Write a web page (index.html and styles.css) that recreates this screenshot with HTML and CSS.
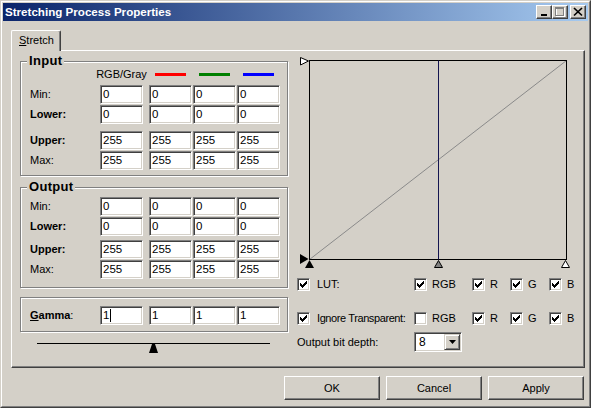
FILE: index.html
```html
<!DOCTYPE html>
<html>
<head>
<meta charset="utf-8">
<title>Stretching Process Properties</title>
<link rel="stylesheet" href="styles.css">
</head>
<body>
<div class="window">
  <div class="frame">
    <div class="titlebar">
      <span class="title">Stretching Process Properties</span>
      <div class="tbtns">
        <div class="tbtn"><svg width="14" height="12" viewBox="0 0 14 12"><rect x="4" y="8" width="6" height="2" fill="#000"/></svg></div>
        <div class="tbtn"><svg width="14" height="12" viewBox="0 0 14 12"><rect x="3.5" y="2.5" width="8" height="8" fill="none" stroke="#fff"/><rect x="2.5" y="1.5" width="8" height="8" fill="none" stroke="#808080"/><rect x="2" y="2" width="9" height="1" fill="#808080"/></svg></div>
        <div class="tbtn close"><svg width="14" height="12" viewBox="0 0 14 12"><path d="M3 2 L11 9.5 M11 2 L3 9.5" stroke="#000" stroke-width="1.7" fill="none"/></svg></div>
      </div>
    </div>
    <div class="content">
      <div class="tabs"><div class="tab"><u>S</u>tretch</div></div>
      <div class="panel">
        <div class="left">
          <div class="group g-input">
            <div class="gtitle">Input</div>
            <div class="hdr">
              <div class="lbl"></div>
              <div class="hc">RGB/Gray</div>
              <div class="hc c2"><span class="bar red"></span></div>
              <div class="hc c3"><span class="bar green"></span></div>
              <div class="hc c4"><span class="bar blue"></span></div>
            </div>
            <div class="row first-in"><div class="lbl">Min:</div><div class="field">0</div><div class="field c2">0</div><div class="field c3">0</div><div class="field c4">0</div></div>
            <div class="row"><div class="lbl b">Lower:</div><div class="field">0</div><div class="field c2">0</div><div class="field c3">0</div><div class="field c4">0</div></div>
            <div class="row split-in"><div class="lbl b">Upper:</div><div class="field">255</div><div class="field c2">255</div><div class="field c3">255</div><div class="field c4">255</div></div>
            <div class="row"><div class="lbl">Max:</div><div class="field">255</div><div class="field c2">255</div><div class="field c3">255</div><div class="field c4">255</div></div>
          </div>
          <div class="group g-output">
            <div class="gtitle">Output</div>
            <div class="row first-out"><div class="lbl">Min:</div><div class="field">0</div><div class="field c2">0</div><div class="field c3">0</div><div class="field c4">0</div></div>
            <div class="row"><div class="lbl b">Lower:</div><div class="field">0</div><div class="field c2">0</div><div class="field c3">0</div><div class="field c4">0</div></div>
            <div class="row split-out"><div class="lbl b">Upper:</div><div class="field">255</div><div class="field c2">255</div><div class="field c3">255</div><div class="field c4">255</div></div>
            <div class="row"><div class="lbl">Max:</div><div class="field">255</div><div class="field c2">255</div><div class="field c3">255</div><div class="field c4">255</div></div>
          </div>
          <div class="group g-gamma">
            <div class="row"><div class="lbl"><span class="b"><u>G</u>amma</span>:</div><div class="field">1<span class="caret"></span></div><div class="field c2">1</div><div class="field c3">1</div><div class="field c4">1</div></div>
          </div>
          <div class="slider">
            <div class="track"></div>
            <svg class="thumb" width="9" height="9" viewBox="0 0 9 9"><polygon points="3,0 6,0 9,9 0,9" fill="#000"/></svg>
          </div>
        </div>
        <div class="right">
          <svg class="graph" width="276" height="216" viewBox="0 0 276 216">
            <line x1="11.5" y1="204.5" x2="268.5" y2="5.5" stroke="#8a8a8a" stroke-width="1"/>
            <rect x="11.5" y="5.5" width="257" height="199" fill="none" stroke="#000"/>
            <line x1="140.5" y1="5.5" x2="140.5" y2="204.5" stroke="#141450"/>
            <polygon points="2.5,2.5 10.5,6 2.5,10" fill="#fff" stroke="#000"/>
            <polygon points="2,199 10.5,204 2,209" fill="#000"/>
            <polygon points="7,213 11.5,205 16,213" fill="#000"/>
            <polygon points="136.5,212.5 140.5,205.5 144.5,212.5" fill="#808080" stroke="#000"/>
            <polygon points="263.5,212.5 267.5,205.5 271.5,212.5" fill="#fff" stroke="#000"/>
          </svg>
          <div class="opts lut">
            <div class="opt wide"><span class="cb on"></span>LUT:</div>
            <div class="opt"><span class="cb on"></span>RGB</div>
            <div class="opt"><span class="cb on"></span>R</div>
            <div class="opt"><span class="cb on"></span>G</div>
            <div class="opt"><span class="cb on"></span>B</div>
          </div>
          <div class="opts ign">
            <div class="opt wide"><span class="cb on"></span><span class="tight">Ignore Transparent:</span></div>
            <div class="opt"><span class="cb"></span>RGB</div>
            <div class="opt"><span class="cb on"></span>R</div>
            <div class="opt"><span class="cb on"></span>G</div>
            <div class="opt"><span class="cb on"></span>B</div>
          </div>
          <div class="opts depth">
            <div class="opt">Output bit depth:</div>
            <div class="select"><span class="sval">8</span><span class="sbtn"><svg width="7" height="4" viewBox="0 0 7 4"><polygon points="0,0 7,0 3.5,4" fill="#000"/></svg></span></div>
          </div>
        </div>
      </div>
      <div class="buttons">
        <div class="btn">OK</div>
        <div class="btn">Cancel</div>
        <div class="btn">Apply</div>
      </div>
    </div>
  </div>
</div>
</body>
</html>
```
FILE: styles.css
```css
html, body {
  margin: 0;
  padding: 0;
  background: #d4d0c8;
}
body {
  font-family: "Liberation Sans", Arial, sans-serif;
  font-size: 11px;
  color: #000;
}
.window {
  width: 591px;
  height: 408px;
  box-sizing: border-box;
  border: 1px solid;
  border-color: #d4d0c8 #404040 #404040 #d4d0c8;
  background: #d4d0c8;
}
.frame {
  height: 100%;
  box-sizing: border-box;
  border: 1px solid;
  border-color: #fff #808080 #808080 #fff;
  padding: 1px;
  display: flex;
  flex-direction: column;
}
.titlebar {
  height: 18px;
  flex: none;
  display: flex;
  align-items: center;
  padding: 0 2px;
  background: linear-gradient(to right, #0a246a, #a6caf0);
}
.title {
  color: #fff;
  font-weight: bold;
  font-size: 11.6px;
  line-height: 18px;
}
.tbtns {
  margin-left: auto;
  display: flex;
}
.tbtn {
  width: 16px;
  height: 14px;
  box-sizing: border-box;
  border: 1px solid;
  border-color: #fff #404040 #404040 #fff;
  box-shadow: inset -1px -1px 0 #808080;
  background: #d4d0c8;
}
.tbtn svg { display: block; }
.tbtn.close { margin-left: 2px; }
.content {
  flex: 1;
  padding: 9px 3px 0 8px;
  display: flex;
  flex-direction: column;
}
.tabs {
  display: flex;
  height: 20px;
}
.tab {
  position: relative;
  z-index: 1;
  width: 50px;
  height: 21px;
  box-sizing: border-box;
  border-left: 1px solid #fff;
  border-top: 1px solid #fff;
  border-right: 1px solid #404040;
  border-top-left-radius: 2px;
  border-top-right-radius: 2px;
  box-shadow: inset -1px 0 0 #808080;
  background: #d4d0c8;
  padding-left: 7px;
  line-height: 18px;
}
.panel {
  height: 318px;
  box-sizing: border-box;
  border: 1px solid;
  border-color: #fff #404040 #404040 #fff;
  box-shadow: inset -1px -1px 0 #808080;
  display: flex;
}
.left {
  width: 268px;
  margin: 10px 0 0 8px;
}
.group {
  width: 268px;
  box-sizing: border-box;
  border: 1px solid #808080;
  box-shadow: inset 1px 1px 0 #fff, 1px 1px 0 #fff;
  padding-left: 9px;
}
.g-input { height: 115px; }
.g-output { height: 101px; margin-top: 11px; }
.g-gamma { height: 35px; margin-top: 9px; padding-top: 8px; }
.gtitle {
  display: table;
  margin: -8px 0 0 -3px;
  padding: 0 2px;
  background: #d4d0c8;
  font-weight: bold;
  font-size: 13px;
  line-height: 14px;
  letter-spacing: 0.3px;
}
.hdr {
  display: flex;
  align-items: center;
  height: 13px;
  line-height: 13px;
}
.hc {
  width: 43px;
  text-align: center;
  display: flex;
  justify-content: center;
  align-items: center;
  height: 13px;
}
.bar {
  display: block;
  width: 31px;
  height: 3px;
  margin-top: -1px;
}
.red { background: #ff0000; }
.green { background: #008000; }
.blue { background: #0000ff; }
.row {
  display: flex;
  height: 19px;
  margin-top: 1px;
}
.first-in { margin-top: 4px; }
.split-in { margin-top: 7px; }
.first-out { margin-top: 3px; }
.split-out { margin-top: 4px; }
.g-gamma .row { margin-top: 0; }
.lbl {
  width: 70px;
  line-height: 19px;
  white-space: nowrap;
}
.b { font-weight: bold; }
.field {
  width: 43px;
  height: 19px;
  box-sizing: border-box;
  border: 1px solid;
  border-color: #808080 #fff #fff #808080;
  box-shadow: inset 1px 1px 0 #404040, inset -1px -1px 0 #d4d0c8;
  background: #fff;
  padding-left: 2px;
  line-height: 17px;
  display: flex;
  align-items: center;
  font-size: 11.5px;
}
.c2 { margin-left: 6px; }
.c3, .c4 { margin-left: 1px; }
.caret {
  display: inline-block;
  width: 1px;
  height: 13px;
  background: #000;
  margin-left: 1px;
}
.slider {
  margin: 11px 0 0 17px;
}
.track {
  width: 233px;
  height: 0;
  border-top: 1px solid #000;
}
.thumb {
  display: block;
  margin-left: 112px;
}
.right {
  margin-left: 9px;
  display: flex;
  flex-direction: column;
}
.graph {
  display: block;
  margin: 4px 0 0 1px;
}
.opts {
  display: grid;
  grid-template-columns: 117px 58px 38px 39px auto;
  align-items: center;
}
.lut { margin-top: 7px; height: 13px; }
.ign { margin-top: 21px; height: 13px; }
.depth { margin-top: 7px; height: 20px; }
.opt {
  display: flex;
  align-items: center;
  gap: 5px;
  white-space: nowrap;
  line-height: 13px;
}
.opt.wide { gap: 7px; }
.tight { letter-spacing: -0.4px; }
.cb {
  flex: none;
  width: 13px;
  height: 13px;
  box-sizing: border-box;
  border: 1px solid;
  border-color: #808080 #fff #fff #808080;
  box-shadow: inset 1px 1px 0 #404040, inset -1px -1px 0 #d4d0c8;
  background: #fff;
}
.cb.on {
  background: #fff url("data:image/svg+xml,%3Csvg xmlns='http://www.w3.org/2000/svg' width='11' height='11'%3E%3Cpath d='M2 4h1v3H2zM3 5h1v3H3zM4 6h1v3H4zM5 5h1v3H5zM6 4h1v3H6zM7 3h1v3H7zM8 2h1v3H8z' fill='%23000'/%3E%3C/svg%3E") no-repeat 0 0;
}
.select {
  width: 48px;
  height: 20px;
  box-sizing: border-box;
  border: 1px solid;
  border-color: #808080 #fff #fff #808080;
  box-shadow: inset 1px 1px 0 #404040, inset -1px -1px 0 #d4d0c8;
  background: #fff;
  display: flex;
  align-items: center;
  padding: 1px;
}
.sval {
  padding-left: 3px;
  font-size: 12px;
}
.sbtn {
  margin-left: auto;
  width: 16px;
  height: 16px;
  box-sizing: border-box;
  border: 1px solid;
  border-color: #d4d0c8 #404040 #404040 #d4d0c8;
  box-shadow: inset 1px 1px 0 #fff, inset -1px -1px 0 #808080;
  background: #d4d0c8;
  display: flex;
  align-items: center;
  justify-content: center;
}
.sbtn svg { display: block; }
.buttons {
  display: flex;
  justify-content: flex-end;
  gap: 6px;
  margin: 8px 1px 0 0;
}
.btn {
  width: 96px;
  height: 24px;
  box-sizing: border-box;
  border: 1px solid;
  border-color: #fff #404040 #404040 #fff;
  box-shadow: inset -1px -1px 0 #808080;
  text-align: center;
  line-height: 22px;
}
```
